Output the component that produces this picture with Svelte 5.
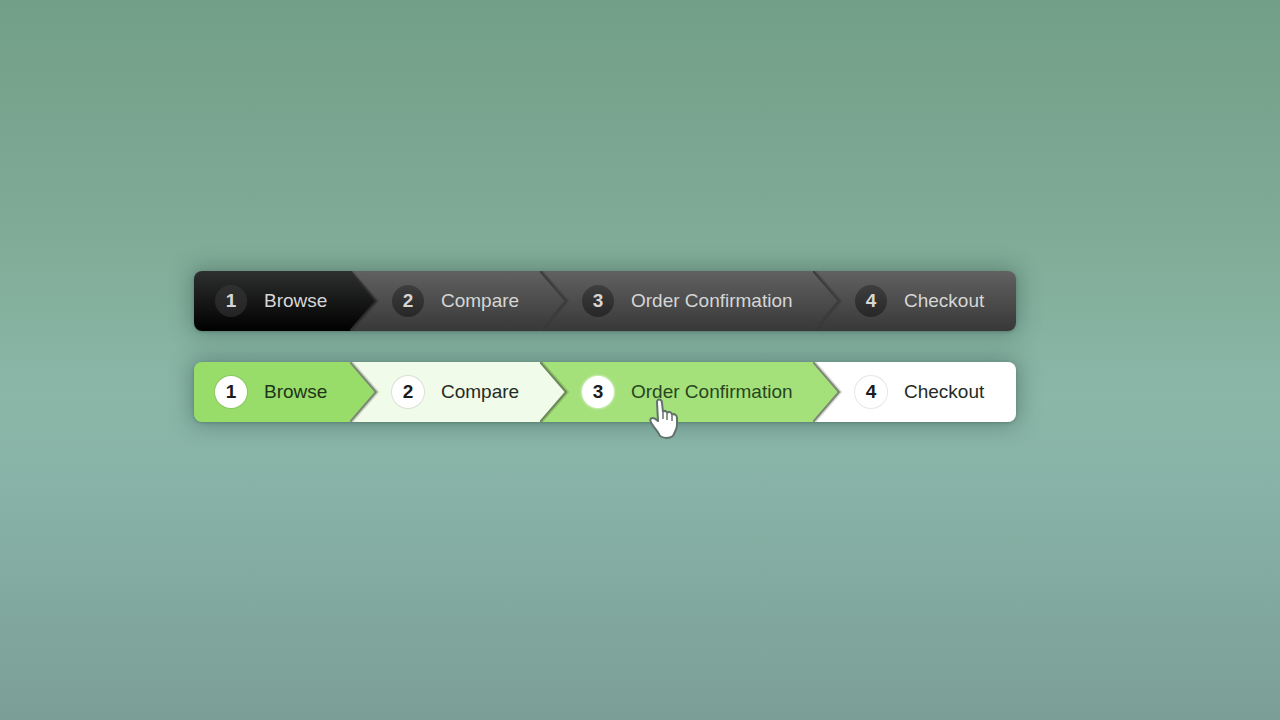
<script>
  const steps = ['Browse', 'Compare', 'Order Confirmation', 'Checkout'];
  const bars = [
    { theme: 'dark', label: 'Dark checkout steps', active: 0, hovered: -1 },
    { theme: 'light', label: 'Light checkout steps', active: 0, hovered: 2 }
  ];
</script>

<main>
  {#each bars as bar}
    <nav class="bar {bar.theme}" aria-label={bar.label}>
      {#each steps as step, i}
        <a
          href="#{step.toLowerCase().replace(' ', '-')}"
          class:active={i === bar.active}
          class:fading={bar.theme === 'light' && i === 1}
          class:hovered={i === bar.hovered}
          aria-current={i === bar.active ? 'step' : undefined}
        >
          <span class="number">{i + 1}</span>
          <span class="label">{step}</span>
          {#if i < steps.length - 1}
            <svg class="arrow" viewBox="0 0 32 60" preserveAspectRatio="none" aria-hidden="true">
              <defs>
                <linearGradient id="{bar.theme}-{i}" x1="0" y1="0" x2="0" y2="1">
                  <stop class="from" offset="0" />
                  <stop class="to" offset="1" />
                </linearGradient>
              </defs>
              <path class="halo" d="M0 0L26 30L0 60" />
              <path fill="url(#{bar.theme}-{i})" d="M-1 0H0L26 30L0 60H-1Z" />
              <path class="edge" d="M0 0L26 30L0 60" />
            </svg>
          {/if}
          {#if i === bar.hovered}
            <svg class="pointer" viewBox="0 0 32 42" aria-hidden="true">
              <path
                d="M9 4C9 0 14 1 14 5L15 14C16 12 19 13 19 15C21 13 24 14 24 17C26 15 29 17 29 20V27C29 32 26 35 25 38Q19 42 12 38C10 33 6 30 4 26C0 21 4 17 10 23Z"
              />
              <path class="fingers" d="M15 14V21M19 16V22M24 17V23" />
            </svg>
          {/if}
        </a>
      {/each}
    </nav>
  {/each}
</main>

<style>
  :global(body) {
    margin: 0;
  }

  main {
    box-sizing: border-box;
    min-height: 100vh;
    padding: 271px 264px 0 194px;
    display: flex;
    flex-direction: column;
    gap: 31px;
    font-family: 'Liberation Sans', Arial, sans-serif;
    font-size: 19px;
    background: linear-gradient(#729f88, #7faa95 30%, #8ab7a8 55%, #88b2a7 68%, #7b9f96);
  }

  .bar {
    display: grid;
    grid-template-columns: 156fr 190fr 273fr 203fr;
    border-radius: 8px;
    box-shadow: 0 0 22px 3px rgba(50, 85, 76, 0.45), 0 1px 3px rgba(30, 60, 50, 0.3);
  }

  a {
    --from: #606160;
    --to: #373837;
    --edge: #3b3c3b;
    --halo: rgba(50, 50, 50, 0.3);
    position: relative;
    display: flex;
    align-items: center;
    gap: 17px;
    min-height: 60px;
    padding-left: 42px;
    color: #d6d6d6;
    text-decoration: none;
    white-space: nowrap;
    background: linear-gradient(var(--from), var(--to));
  }

  a:first-child {
    padding-left: 21px;
    border-radius: 8px 0 0 8px;
  }

  a:last-child {
    border-radius: 0 8px 8px 0;
  }

  .number {
    display: grid;
    place-items: center;
    width: 32px;
    height: 32px;
    border-radius: 50%;
    font-weight: bold;
    background: linear-gradient(#3e3e3e, #272727);
  }

  .dark .active {
    --from: #2e2f2f;
    --to: #000;
    --edge: #2c2c2c;
  }

  .dark .active .number {
    background: linear-gradient(#303030, #242424);
  }

  .light a {
    --from: #fff;
    --to: #fff;
    --halo: rgba(60, 80, 50, 0.22);
    --edge: #7d8577;
    color: #252b25;
  }

  .light .active {
    --from: #98dc69;
    --to: #98dc69;
    color: #203519;
  }

  .light .fading {
    --from: #f0fbe9;
    --to: #f0fbe9;
    --edge: #6b8856;
  }

  .light .hovered {
    --from: #a5e17b;
    --to: #a5e17b;
    color: #28451f;
  }

  .light .number {
    color: #1c1c1c;
    background: #fff;
    box-shadow: 0 0 0 1px rgba(60, 60, 80, 0.13);
  }

  .light .hovered .number {
    box-shadow: 0 0 2px 1px rgba(255, 255, 255, 0.5);
  }

  .arrow {
    position: absolute;
    z-index: 1;
    top: 0;
    left: 100%;
    width: 32px;
    height: 100%;
  }

  .from {
    stop-color: var(--from);
  }

  .to {
    stop-color: var(--to);
  }

  .edge,
  .halo {
    fill: none;
    stroke: var(--edge);
    stroke-width: 2;
  }

  .halo {
    stroke: var(--halo);
    stroke-width: 5;
  }

  .pointer {
    position: absolute;
    z-index: 2;
    top: 36px;
    left: 108px;
    width: 32px;
    height: 42px;
    fill: #fff;
    stroke: #62736b;
    stroke-width: 2;
    stroke-linejoin: round;
  }

  .fingers {
    fill: none;
    stroke: #8b9691;
  }
</style>
